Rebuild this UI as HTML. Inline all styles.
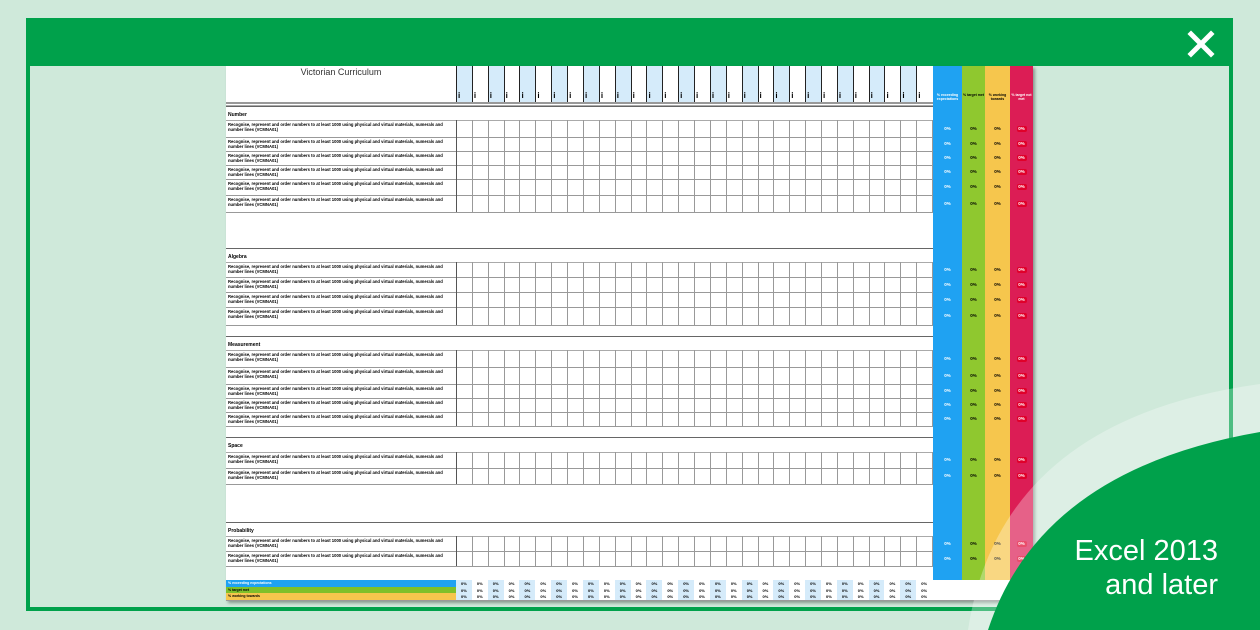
<!DOCTYPE html>
<html><head><meta charset="utf-8"><style>
*{margin:0;padding:0;box-sizing:border-box}
body{width:1260px;height:630px;overflow:hidden;background:#cfe9da;position:relative;font-family:"Liberation Sans",sans-serif}
.a{position:absolute}
#frame{left:26px;top:18px;width:1207px;height:593px;background:#00a14b}
#inner{left:30px;top:66px;width:1199px;height:541px;background:#cfe9da}
#sheet{left:226px;top:66px;width:807px;height:535px;background:#fff;box-shadow:2px 2px 3px rgba(0,0,0,.35);overflow:hidden}
.t{font-size:4.2px;font-weight:bold;color:#000;line-height:5px}
.h{font-size:5px;font-weight:bold;color:#000}
.pc{font-size:4.5px;font-weight:bold;text-align:center}
</style></head><body>
<div id="frame" class="a"></div>
<div id="inner" class="a"></div>
<svg class="a" style="left:1186px;top:29px" width="30" height="30" viewBox="0 0 30 30"><path d="M5 5L25 25M25 5L5 25" stroke="#fff" stroke-width="5" stroke-linecap="square"/></svg>
<div id="sheet" class="a"></div>
<svg class="a" style="left:0;top:0" width="1260" height="630">
<path d="M968 630 Q1000 420 1260 384 L1260 630Z" fill="rgba(255,255,255,0.3)"/>
<path d="M988 630 Q1040 470 1260 432 L1260 630Z" fill="#00a14b"/>
<text x="1218" y="560" font-size="29" fill="#fff" text-anchor="end" font-family="Liberation Sans">Excel 2013</text>
<text x="1218" y="594" font-size="29" fill="#fff" text-anchor="end" font-family="Liberation Sans">and later</text>
</svg>
<script>
var s=document.getElementById('sheet'),h='';
function d(x,y,w,hh,st,c){h+='<div class="a '+(c||'')+'" style="left:'+x+'px;top:'+y+'px;width:'+w+'px;height:'+hh+'px;'+st+'">';}
var X0=230,cw=15.87;
h+='<div class="a" style="left:0;top:1px;width:230px;text-align:center;font-size:9px;color:#333">Victorian Curriculum</div>';
for(var i=0;i<30;i++){var x=X0+i*cw;d(x,0,cw,36,(i%2==0?'background:#d5ebfa;':'')+'border-left:1px solid #222');h+='</div>';h+='<div class="a" style="left:'+(x+2)+'px;top:25px;font-size:8px;font-weight:bold">i</div>';}
d(0,36,707,2,'background:#999');h+='</div>';
d(0,39,707,1,'background:#aaa');h+='</div>';
var cols=[[707,29,'#1fa2f2','#fff','% exceeding expectations'],[736,23,'#8fc82f','#000','% target met'],[759,25,'#f6c64d','#000','% working towards'],[784,23,'#dc1d55','#fff','% target not met']];
cols.forEach(function(c){d(c[0],0,c[1],514,'background:'+c[2]);h+='<div class="pc" style="color:'+c[3]+';padding-top:27px;font-size:3.5px">'+c[4]+'</div></div>';});
var secs=[['Number',42,[54,71,85,99,113,129,146]],['Algebra',184,[196,211,226,241,259]],['Measurement',272,[284,301,318,332,346,360]],['Space',373,[386,402,418]],['Probability',458,[470,485,500]]];
var txt='Recognise, represent and order numbers to at least 1000 using physical and virtual materials, numerals and number lines (VCMNA01)';
secs.forEach(function(S,k){
 var y=S[1];d(0,y-2,707,1,'background:#666');h+='</div>';
 h+='<div class="a h" style="left:2px;top:'+(y+4)+'px">'+S[0]+'</div>';
 var r=S[2];d(0,r[0],707,1,'background:#aaa');h+='</div>';
 for(var j=0;j<r.length-1;j++){var a=r[j],b=r[j+1];d(0,b,707,1,'background:#999');h+='</div>';
  h+='<div class="a t" style="left:2px;top:'+(a+2)+'px;width:225px;height:'+(b-a-2)+'px;overflow:hidden">'+txt+'</div>';
  for(var i=0;i<=30;i++){d(X0+i*cw,a,1,b-a,'background:'+(i==0?'#555':'#999'));h+='</div>';}
  var cy=(a+b)/2-3;
  cols.forEach(function(c){h+='<div class="a pc" style="left:'+(c[0]+c[1]/2-5)+'px;top:'+cy+'px;width:10px;height:6px;line-height:6px;color:'+c[3]+';'+(c[2]=='#dc1d55'?'background:#e0002a;border-radius:2px;':'')+'">0%</div>';});
 }
});
var sy=514;
d(0,sy,707,21,'background:#fff');h+='</div>';
[['#1fa2f2','% exceeding expectations','#fff'],['#7fc02a','% target met','#000'],['#f6c64d','% working towards','#000']].forEach(function(c,k){d(0,sy+k*6.5,230,6.5,'background:'+c[0]);h+='<div style="font-size:3.5px;font-weight:bold;color:'+c[2]+';padding-left:2px;line-height:6px">'+c[1]+'</div></div>';});
d(0,sy+19.5,230,1,'background:#e33');h+='</div>';
for(var i=0;i<30;i++){var x=X0+i*cw;d(x,sy,cw,20,(i%2==0?'background:#d5ebfa;':''));h+='</div>';for(var k=0;k<3;k++)h+='<div class="a pc" style="left:'+x+'px;top:'+(sy+1+k*6.5)+'px;width:'+cw+'px;font-size:4px">0%</div>';}
d(0,534,807,1,'background:#999');h+='</div>';
s.innerHTML=h;
</script>
</body></html>
